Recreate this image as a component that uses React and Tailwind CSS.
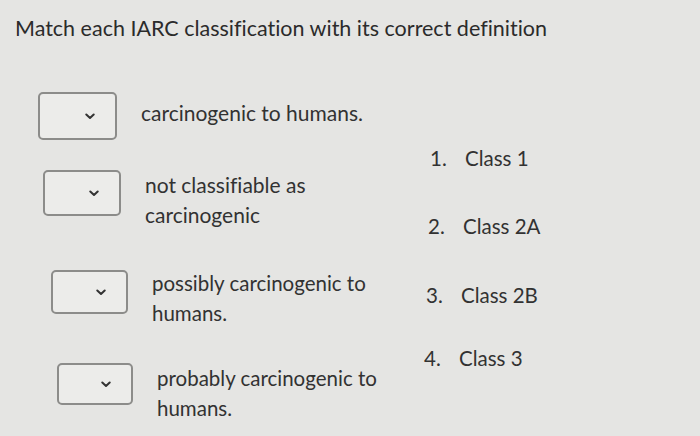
import React from "react";

function Select({ w, h }) {
  return (
    <div
      className={`flex shrink-0 items-center justify-end rounded-[5px] border-2 border-[#8c8c8a] bg-[#ececea] pr-[20px] ${w} ${h}`}
    >
      <svg width="10" height="7" viewBox="0 0 10 7" className="mt-[1px]">
        <path d="M1.3 1.5 L5 5 L8.7 1.5" fill="none" stroke="#333" strokeWidth="2" strokeLinecap="round" strokeLinejoin="round" />
      </svg>
    </div>
  );
}

const rows = [
  { text: ["carcinogenic to humans."], cls: "ml-[38px] mt-[49px]", w: "w-[79px]", h: "h-[48px]", tx: "mt-[6px] text-[21px]" },
  { text: ["not classifiable as", "carcinogenic"], cls: "ml-[43px] mt-[30px]", w: "w-[78px]", h: "h-[46px]", tx: "mt-0 text-[21px]" },
  { text: ["possibly carcinogenic to", "humans."], cls: "ml-[51px] mt-[40px]", w: "w-[77px]", h: "h-[44px]", tx: "-mt-[2px] text-[20.5px]" },
  { text: ["probably carcinogenic to", "humans."], cls: "ml-[57px] mt-[35px]", w: "w-[76px]", h: "h-[42px]", tx: "mt-0 text-[20.5px]" },
];

const options = [
  { n: "1.", label: "Class 1", cls: "mt-[100px] ml-[30px]" },
  { n: "2.", label: "Class 2A", cls: "mt-[38px] ml-[28px]" },
  { n: "3.", label: "Class 2B", cls: "mt-[39px] ml-[26px]" },
  { n: "4.", label: "Class 3", cls: "mt-[33px] ml-[24px]" },
];

export default function App() {
  return (
    <div
      className="h-[436px] w-[700px] overflow-hidden bg-[#e5e5e3] text-[#323232] [font-variant-ligatures:none]"
      style={{ fontFamily: "Lato, 'Open Sans', sans-serif" }}
    >
      <h1 className="ml-[15px] pt-[13px] text-[21.5px] leading-[30px] font-normal whitespace-nowrap text-[#2b2b2b]">
        Match each IARC classification with its correct definition
      </h1>
      <div className="flex">
        <div className="flex w-[400px] shrink-0 flex-col">
          {rows.map((r, i) => (
            <div key={i} className={`flex items-start gap-[24px] ${r.cls}`}>
              <Select w={r.w} h={r.h} />
              <div className={`leading-[30px] whitespace-nowrap ${r.tx}`}>
                {r.text.map((t, j) => (
                  <div key={j}>{t}</div>
                ))}
              </div>
            </div>
          ))}
        </div>
        <div className="flex flex-col">
          {options.map((o, i) => (
            <div key={i} className={`flex text-[20.5px] leading-[30px] whitespace-nowrap ${o.cls}`}>
              <span className="w-[35px]">{o.n}</span>
              <span>{o.label}</span>
            </div>
          ))}
        </div>
      </div>
    </div>
  );
}
